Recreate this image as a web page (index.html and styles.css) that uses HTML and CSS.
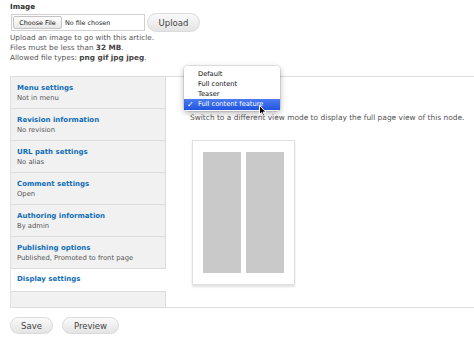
FILE: index.html
```html
<!DOCTYPE html>
<html>
<head>
<meta charset="utf-8">
<link rel="stylesheet" href="styles.css">
</head>
<body>
<div class="page">
  <div class="field">
    <div class="label">Image</div>
    <div class="upload-row">
      <div class="file-input"><span class="file-btn">Choose File</span><span class="file-text">No file chosen</span></div>
      <span class="btn upload">Upload</span>
    </div>
    <div class="desc">Upload an image to go with this article.<br>Files must be less than <strong>32 MB</strong>.<br>Allowed file types: <strong>png gif jpg jpeg</strong>.</div>
  </div>

  <div class="vtabs">
    <ul class="vtabs-list">
      <li class="tab"><span class="tab-title">Menu settings</span><span class="tab-summary">Not in menu</span></li>
      <li class="tab"><span class="tab-title">Revision information</span><span class="tab-summary">No revision</span></li>
      <li class="tab"><span class="tab-title">URL path settings</span><span class="tab-summary">No alias</span></li>
      <li class="tab"><span class="tab-title">Comment settings</span><span class="tab-summary">Open</span></li>
      <li class="tab"><span class="tab-title">Authoring information</span><span class="tab-summary">By admin</span></li>
      <li class="tab"><span class="tab-title">Publishing options</span><span class="tab-summary">Published, Promoted to front page</span></li>
      <li class="tab selected"><span class="tab-title">Display settings</span></li>
    </ul>
    <div class="pane">
      <div class="select-row">
        <div class="popup">
          <div class="opt">Default</div>
          <div class="opt">Full content</div>
          <div class="opt">Teaser</div>
          <div class="opt active"><span class="check">✓</span>Full content feature</div>
          <svg class="cursor" width="8" height="12" viewBox="0 0 8 12"><path d="M0.5 0.5 L0.5 9.5 L2.6 7.6 L4.1 11 L5.5 10.4 L4.1 7.1 L7 7.1 Z" fill="#000" stroke="#fff" stroke-width="1"/></svg>
        </div>
      </div>
      <div class="pane-desc">Switch to a different view mode to display the full page view of this node.</div>
      <div class="preview"><div class="col"></div><div class="col"></div></div>
    </div>
  </div>

  <div class="actions">
    <span class="btn save">Save</span>
    <span class="btn preview-btn">Preview</span>
  </div>
</div>
</body>
</html>
```

FILE: styles.css
```css
html, body {
  margin: 0;
  padding: 0;
  background: #fff;
  overflow: hidden;
}
body {
  font-family: "DejaVu Sans", sans-serif;
  color: #333;
}
.page {
  padding: 2px 0 0 10px;
}
.label {
  font-weight: bold;
  font-size: 7.2px;
  line-height: 10px;
  color: #333;
}
.upload-row {
  display: flex;
  align-items: center;
  margin-top: 1px;
  height: 19px;
}
.file-input {
  display: flex;
  align-items: center;
  width: 132px;
  height: 15px;
  margin-left: 1px;
  border: 1px solid #cfcfcf;
  background: #fff;
}
.file-btn {
  display: inline-flex;
  align-items: center;
  justify-content: center;
  margin-left: 1px;
  width: 47px;
  height: 11px;
  border: 1px solid #c4c4c4;
  border-radius: 2px;
  background: linear-gradient(#fdfdfd, #e8e8e8);
  font-size: 6.4px;
  color: #111;
}
.file-text {
  margin-left: 3px;
  font-size: 6.4px;
  color: #222;
}
.btn {
  display: inline-flex;
  align-items: center;
  justify-content: center;
  border: 1px solid #dadada;
  border-radius: 10px;
  background: linear-gradient(#fafafa, #e4e4e4);
  font-size: 8.5px;
  color: #444;
  box-sizing: border-box;
}
.upload {
  margin-left: 2px;
  width: 53px;
  height: 19px;
}
.desc {
  margin-top: 1px;
  font-size: 7.3px;
  line-height: 10px;
  color: #555;
}
.desc strong {
  color: #444;
}
.vtabs {
  display: flex;
  margin-top: 13px;
  width: 480px;
  height: 230px;
  border-top: 1px solid #dcdcdc;
  border-bottom: 1px solid #dcdcdc;
  border-left: 1px solid #e2e2e2;
}
.vtabs-list {
  list-style: none;
  margin: 0;
  padding: 0;
  width: 154px;
  flex: none;
  background: #f1f1f1;
  border-right: 1px solid #dcdcdc;
}
.tab {
  display: flex;
  flex-direction: column;
  height: 31px;
  box-sizing: content-box;
  padding: 0 0 0 6px;
  border-bottom: 1px solid #dcdcdc;
}
.tab-title {
  margin-top: 6px;
  font-weight: bold;
  font-size: 7px;
  line-height: 10px;
  color: #0f6db6;
}
.tab-summary {
  font-size: 6.8px;
  line-height: 10px;
  color: #555;
}
.tab.selected {
  height: 22px;
  background: #fff;
  margin-right: -1px;
}
.tab.selected .tab-title {
  margin-top: 5px;
}
.pane {
  flex: 1;
  padding: 23px 0 0 24px;
}
.select-row {
  position: relative;
  height: 12px;
}
.popup {
  position: absolute;
  left: -6px;
  top: -34px;
  width: 96px;
  padding: 3px 0 1px;
  background: rgba(255,255,255,0.97);
  border-radius: 4px;
  box-shadow: 0 2px 6px rgba(0,0,0,0.3), 0 0 0 1px rgba(0,0,0,0.08);
}
.opt {
  position: relative;
  height: 10px;
  line-height: 10px;
  padding-left: 14px;
  font-size: 6.7px;
  color: #111;
}
.opt.active {
  height: 11px;
  line-height: 11px;
  background: linear-gradient(#4c7cf0, #1f54e0);
  color: #fff;
}
.check {
  position: absolute;
  left: 3px;
  top: 0;
  font-size: 8px;
  font-weight: bold;
}
.cursor {
  position: absolute;
  left: 75px;
  top: 39px;
}
.pane-desc {
  margin-top: 1px;
  font-size: 7.45px;
  line-height: 10px;
  color: #555;
  white-space: nowrap;
}
.preview {
  display: flex;
  gap: 5px;
  margin: 17px 0 0 2px;
  width: 81px;
  height: 121px;
  padding: 11px 10px 11px 10px;
  border: 1px solid #e0e0e0;
  background: #fff;
  box-shadow: 0 2px 2px rgba(0,0,0,0.12);
}
.col {
  flex: 1;
  background: #c9c9c9;
}
.actions {
  display: flex;
  gap: 9px;
  margin-top: 9px;
}
.save {
  width: 43px;
  height: 17px;
}
.preview-btn {
  width: 57px;
  height: 17px;
}
```
